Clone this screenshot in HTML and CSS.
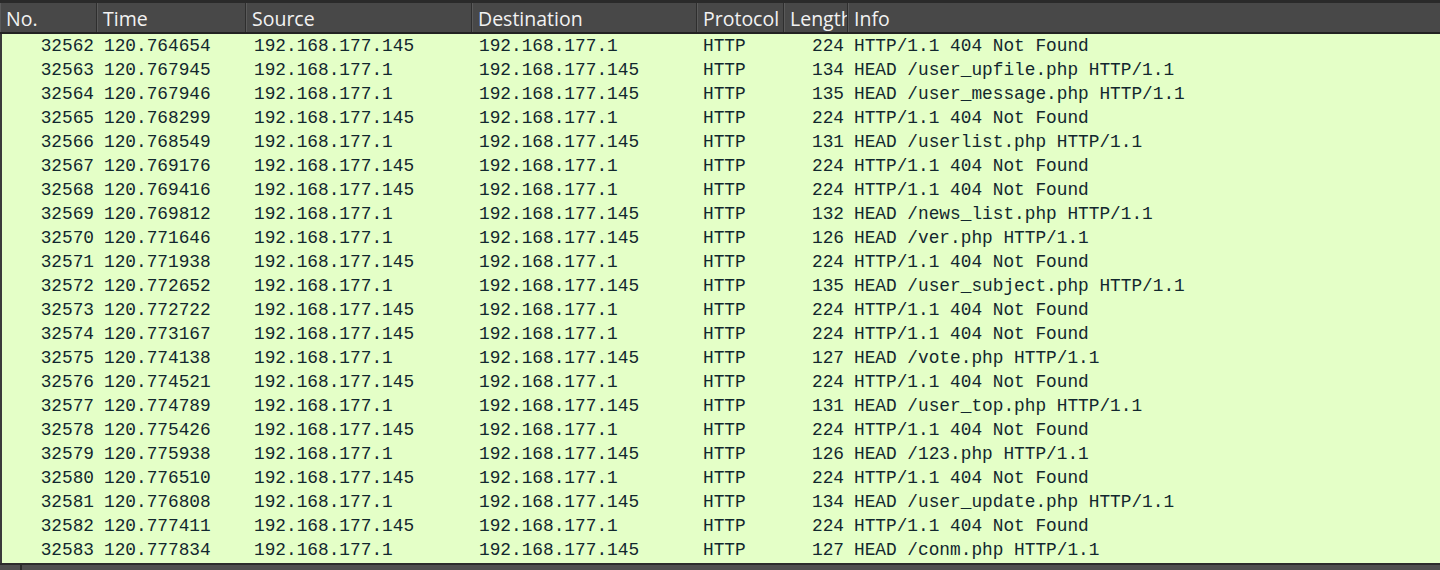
FILE: index.html
```html
<!DOCTYPE html>
<html>
<head>
<meta charset="utf-8">
<link rel="stylesheet" href="styles.css">
</head>
<body>
<div class="pane">
  <div class="head">
    <div class="hc">No.</div>
    <div class="hc">Time</div>
    <div class="hc">Source</div>
    <div class="hc">Destination</div>
    <div class="hc">Protocol</div>
    <div class="hc">Length</div>
    <div class="hc last">Info</div>
  </div>
  <div class="rows">
    <div class="row"><span class="r">32562</span><span>120.764654</span><span>192.168.177.145</span><span>192.168.177.1</span><span>HTTP</span><span class="r">224</span><span>HTTP/1.1 404 Not Found</span></div>
    <div class="row"><span class="r">32563</span><span>120.767945</span><span>192.168.177.1</span><span>192.168.177.145</span><span>HTTP</span><span class="r">134</span><span>HEAD /user_upfile.php HTTP/1.1</span></div>
    <div class="row"><span class="r">32564</span><span>120.767946</span><span>192.168.177.1</span><span>192.168.177.145</span><span>HTTP</span><span class="r">135</span><span>HEAD /user_message.php HTTP/1.1</span></div>
    <div class="row"><span class="r">32565</span><span>120.768299</span><span>192.168.177.145</span><span>192.168.177.1</span><span>HTTP</span><span class="r">224</span><span>HTTP/1.1 404 Not Found</span></div>
    <div class="row"><span class="r">32566</span><span>120.768549</span><span>192.168.177.1</span><span>192.168.177.145</span><span>HTTP</span><span class="r">131</span><span>HEAD /userlist.php HTTP/1.1</span></div>
    <div class="row"><span class="r">32567</span><span>120.769176</span><span>192.168.177.145</span><span>192.168.177.1</span><span>HTTP</span><span class="r">224</span><span>HTTP/1.1 404 Not Found</span></div>
    <div class="row"><span class="r">32568</span><span>120.769416</span><span>192.168.177.145</span><span>192.168.177.1</span><span>HTTP</span><span class="r">224</span><span>HTTP/1.1 404 Not Found</span></div>
    <div class="row"><span class="r">32569</span><span>120.769812</span><span>192.168.177.1</span><span>192.168.177.145</span><span>HTTP</span><span class="r">132</span><span>HEAD /news_list.php HTTP/1.1</span></div>
    <div class="row"><span class="r">32570</span><span>120.771646</span><span>192.168.177.1</span><span>192.168.177.145</span><span>HTTP</span><span class="r">126</span><span>HEAD /ver.php HTTP/1.1</span></div>
    <div class="row"><span class="r">32571</span><span>120.771938</span><span>192.168.177.145</span><span>192.168.177.1</span><span>HTTP</span><span class="r">224</span><span>HTTP/1.1 404 Not Found</span></div>
    <div class="row"><span class="r">32572</span><span>120.772652</span><span>192.168.177.1</span><span>192.168.177.145</span><span>HTTP</span><span class="r">135</span><span>HEAD /user_subject.php HTTP/1.1</span></div>
    <div class="row"><span class="r">32573</span><span>120.772722</span><span>192.168.177.145</span><span>192.168.177.1</span><span>HTTP</span><span class="r">224</span><span>HTTP/1.1 404 Not Found</span></div>
    <div class="row"><span class="r">32574</span><span>120.773167</span><span>192.168.177.145</span><span>192.168.177.1</span><span>HTTP</span><span class="r">224</span><span>HTTP/1.1 404 Not Found</span></div>
    <div class="row"><span class="r">32575</span><span>120.774138</span><span>192.168.177.1</span><span>192.168.177.145</span><span>HTTP</span><span class="r">127</span><span>HEAD /vote.php HTTP/1.1</span></div>
    <div class="row"><span class="r">32576</span><span>120.774521</span><span>192.168.177.145</span><span>192.168.177.1</span><span>HTTP</span><span class="r">224</span><span>HTTP/1.1 404 Not Found</span></div>
    <div class="row"><span class="r">32577</span><span>120.774789</span><span>192.168.177.1</span><span>192.168.177.145</span><span>HTTP</span><span class="r">131</span><span>HEAD /user_top.php HTTP/1.1</span></div>
    <div class="row"><span class="r">32578</span><span>120.775426</span><span>192.168.177.145</span><span>192.168.177.1</span><span>HTTP</span><span class="r">224</span><span>HTTP/1.1 404 Not Found</span></div>
    <div class="row"><span class="r">32579</span><span>120.775938</span><span>192.168.177.1</span><span>192.168.177.145</span><span>HTTP</span><span class="r">126</span><span>HEAD /123.php HTTP/1.1</span></div>
    <div class="row"><span class="r">32580</span><span>120.776510</span><span>192.168.177.145</span><span>192.168.177.1</span><span>HTTP</span><span class="r">224</span><span>HTTP/1.1 404 Not Found</span></div>
    <div class="row"><span class="r">32581</span><span>120.776808</span><span>192.168.177.1</span><span>192.168.177.145</span><span>HTTP</span><span class="r">134</span><span>HEAD /user_update.php HTTP/1.1</span></div>
    <div class="row"><span class="r">32582</span><span>120.777411</span><span>192.168.177.145</span><span>192.168.177.1</span><span>HTTP</span><span class="r">224</span><span>HTTP/1.1 404 Not Found</span></div>
    <div class="row"><span class="r">32583</span><span>120.777834</span><span>192.168.177.1</span><span>192.168.177.145</span><span>HTTP</span><span class="r">127</span><span>HEAD /conm.php HTTP/1.1</span></div>
  </div>
  <div class="foot"><div class="stub"></div></div>
</div>
</body>
</html>
```

FILE: styles.css
```css
html, body {
  margin: 0;
  padding: 0;
  background: #4f4f4f;
}
body {
  width: 1440px;
  height: 570px;
  overflow: hidden;
}
.pane {
  display: flex;
  flex-direction: column;
  width: 1440px;
  height: 570px;
}
.head {
  display: grid;
  grid-template-columns: 97px 149px 226px 225px 87px 64px 1fr;
  height: 29px;
  background: #484848;
  border-top: 3px solid #2a2a2a;
  border-bottom: 2px solid #222222;
}
.hc {
  font-family: "Open Sans", "Noto Sans", sans-serif;
  font-size: 19.5px;
  line-height: 29px;
  padding-top: 1px;
  box-sizing: border-box;
  color: #f2f2f2;
  padding-left: 6px;
  white-space: nowrap;
  overflow: hidden;
  border-right: 1px solid #2e2e2e;
  box-shadow: inset 1px 0 0 #5a5a5a;
}
.hc.last {
  border-right: none;
}
.rows {
  height: 529px;
  background: #e4ffc7;
  border-left: 2px solid #3a3a3a;
  overflow: hidden;
}
.row {
  display: grid;
  grid-template-columns: 95px 149px 226px 225px 87px 64px 1fr;
  height: 24px;
  font-family: "Liberation Mono", "DejaVu Sans Mono", monospace;
  font-size: 17.8px;
  line-height: 24px;
  color: #12272e;
  white-space: nowrap;
}
.row span {
  padding-left: 7px;
  overflow: hidden;
}
.row span:nth-child(3) { padding-left: 8px; }
.row span:nth-child(5) { padding-left: 6px; }
.row span:nth-child(7) { padding-left: 6px; }
.row span.r {
  text-align: right;
  padding-left: 0;
  padding-right: 3px;
}
.row span:nth-child(6).r {
  padding-right: 4px;
}
.foot {
  flex: 1;
  border-top: 2px solid #2c2c2c;
  background: #4f4f4f;
  display: flex;
}
.stub {
  width: 20px;
  border-right: 2px solid #2c2c2c;
  background: #505050;
}
```
